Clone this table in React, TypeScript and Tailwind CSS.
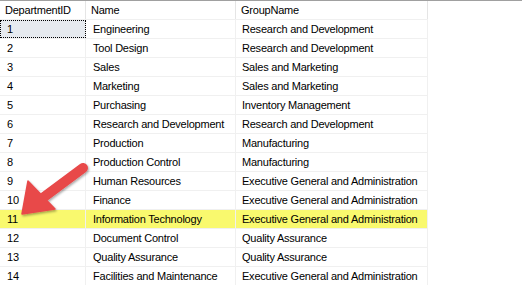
const rows: [string, string, string][] = [
  ["1", "Engineering", "Research and Development"],
  ["2", "Tool Design", "Research and Development"],
  ["3", "Sales", "Sales and Marketing"],
  ["4", "Marketing", "Sales and Marketing"],
  ["5", "Purchasing", "Inventory Management"],
  ["6", "Research and Development", "Research and Development"],
  ["7", "Production", "Manufacturing"],
  ["8", "Production Control", "Manufacturing"],
  ["9", "Human Resources", "Executive General and Administration"],
  ["10", "Finance", "Executive General and Administration"],
  ["11", "Information Technology", "Executive General and Administration"],
  ["12", "Document Control", "Quality Assurance"],
  ["13", "Quality Assurance", "Quality Assurance"],
  ["14", "Facilities and Maintenance", "Executive General and Administration"],
]

function Arrow() {
  // tail (83,168) -> tip (22,214)
  return (
    <svg className="absolute left-0 top-0 pointer-events-none" width="120" height="286" viewBox="0 0 120 286">
      <defs>
        <filter id="sh" x="-20%" y="-20%" width="140%" height="140%">
          <feDropShadow dx="1" dy="1.5" stdDeviation="1.3" floodColor="#000" floodOpacity="0.35" />
        </filter>
      </defs>
      <g filter="url(#sh)" fill="#e8484a" stroke="#e8484a">
        <line x1="83" y1="168" x2="44" y2="197" strokeWidth="10" strokeLinecap="round" />
        <polygon points="22,214 55,209 28,181" strokeWidth="1.5" strokeLinejoin="round" />
      </g>
    </svg>
  )
}

export default function App() {
  return (
    <div
      className="relative w-[522px] h-[286px] bg-white overflow-hidden text-[11px] tracking-[-0.22px] text-black"
      style={{ fontFamily: '"Liberation Sans", Arial, sans-serif' }}
    >
      <div className="border-t border-[#a0a0a0]">
        <div className="flex h-[18px] leading-[18px]">
          <div className="w-[86px] pl-[5px] border-r border-[#e5e5e5]">DepartmentID</div>
          <div className="w-[150px] pl-[5px] border-r border-[#e5e5e5]">Name</div>
          <div className="w-[192px] pl-[5px] border-r border-[#e5e5e5]">GroupName</div>
        </div>
        {rows.map(([id, name, group], i) => (
          <div
            key={id}
            className={`flex w-[428px] h-[19px] leading-[18px] border-t border-[#f0f0f0] ${id === "11" ? "bg-[#f9f96e]" : ""}`}
          >
            <div
              className={`w-[86px] pl-[7px] border-r border-[#f0f0f0] ${i === 0 ? "bg-[#e6eaef] outline outline-1 outline-dotted outline-black -outline-offset-1" : ""}`}
            >
              {id}
            </div>
            <div className="w-[150px] pl-[7px] border-r border-[#f0f0f0]">{name}</div>
            <div className="w-[192px] pl-[6px] border-r border-[#f0f0f0]">{group}</div>
          </div>
        ))}
      </div>
      <Arrow />
    </div>
  )
}
